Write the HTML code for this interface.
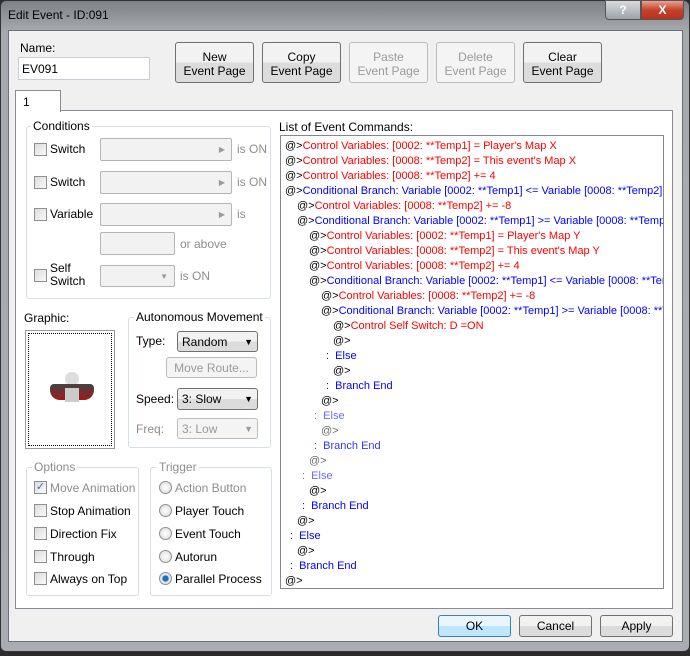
<!DOCTYPE html><html><head><style>
*{box-sizing:border-box;margin:0;padding:0}
body{width:690px;height:656px;background:#2b2b2b;font-family:"Liberation Sans",sans-serif;font-size:12px;color:#000;position:relative;overflow:hidden}
.a{position:absolute}
.frame{left:0;top:0;width:690px;height:652px;background:linear-gradient(#7d8186,#a6aaae 30px,#a9adb1);border:1px solid #333;border-radius:6px}
.client{left:8px;top:30px;width:675px;height:612px;background:#f0f0f0;border:1px solid #6d7177}
.btn{border:1px solid #707070;border-radius:3px;background:linear-gradient(#f2f2f2 50%,#dcdcdc 50%);text-align:center;line-height:14px;font-size:12px}
.dis{color:#9a9a9a;border-color:#bcbcbc;background:#f4f4f4}
.grp{border:1px solid #d5dfe5;border-radius:3px}
.lg{background:#f0f0f0;padding:0 2px;font-size:12px}
.cb{width:13px;height:13px;border:1px solid #8e8f8f;background:linear-gradient(135deg,#dcdcdc,#fafafa)}
.rb{width:13px;height:13px;border:1px solid #8e8f8f;border-radius:50%;background:radial-gradient(#fff,#d8d8d8)}
.dd{border:1px solid #b5b5b5;background:#f2f2f2;border-radius:2px}
.gray{color:#8d8d8d}
.ln{position:absolute;white-space:nowrap;font-size:11px;line-height:15px}
.r{color:#f00}.b{color:#0000ff}
.arr{position:absolute;right:6px;top:6px;font-size:8px;color:#999}
</style></head><body>
<div class="a frame"></div>
<div class="a" style="left:8px;top:8px;font-size:12px">Edit Event - ID:091</div>
<div class="a" style="left:605px;top:0;width:36px;height:20px;border:1px solid #555;border-radius:0 0 0 4px;background:linear-gradient(#d8dadd,#9ea3a8);text-align:center;color:#fff;font-weight:bold;line-height:18px">?</div>
<div class="a" style="left:641px;top:0;width:43px;height:20px;border:1px solid #555;border-radius:0 0 4px 0;background:linear-gradient(#e8a293,#c4412a 50%,#b8321c);text-align:center;color:#fff;font-weight:bold;line-height:18px">X</div>
<div class="a client"></div>
<div class="a" style="left:20px;top:41px">Name:</div>
<div class="a" style="left:18px;top:57px;width:132px;height:23px;border:1px solid #c8ced6;background:#fff;padding:4px 3px">EV091</div>
<div class="a btn" style="left:175px;top:42px;width:79px;height:41px;padding-top:7px">New<br>Event Page</div>
<div class="a btn" style="left:262px;top:42px;width:79px;height:41px;padding-top:7px">Copy<br>Event Page</div>
<div class="a btn dis" style="left:349px;top:42px;width:79px;height:41px;padding-top:7px">Paste<br>Event Page</div>
<div class="a btn dis" style="left:436px;top:42px;width:79px;height:41px;padding-top:7px">Delete<br>Event Page</div>
<div class="a btn" style="left:523px;top:42px;width:79px;height:41px;padding-top:7px">Clear<br>Event Page</div>
<div class="a" style="left:15px;top:110px;width:658px;height:499px;background:#fff;border:1px solid #898c95"></div>
<div class="a" style="left:15px;top:90px;width:46px;height:22px;background:#fff;border:1px solid #898c95;border-bottom:none;padding:4px 7px">1</div>
<!-- conditions -->
<div class="a grp" style="left:26px;top:126px;width:245px;height:173px"></div>
<div class="a lg" style="left:31px;top:119px;background:#fff">Conditions</div>
<div class="a cb" style="left:34px;top:143px"></div><div class="a" style="left:50px;top:142px">Switch</div>
<div class="a dd" style="left:100px;top:138px;width:132px;height:23px"><span class="arr">▶</span></div><div class="a gray" style="left:237px;top:142px">is ON</div>
<div class="a cb" style="left:34px;top:176px"></div><div class="a" style="left:50px;top:175px">Switch</div>
<div class="a dd" style="left:100px;top:171px;width:132px;height:23px"><span class="arr">▶</span></div><div class="a gray" style="left:237px;top:175px">is ON</div>
<div class="a cb" style="left:34px;top:208px"></div><div class="a" style="left:50px;top:207px">Variable</div>
<div class="a dd" style="left:100px;top:203px;width:132px;height:23px"><span class="arr">▶</span></div><div class="a gray" style="left:237px;top:207px">is</div>
<div class="a dd" style="left:100px;top:232px;width:75px;height:23px"></div><div class="a gray" style="left:180px;top:237px">or above</div>
<div class="a cb" style="left:34px;top:269px"></div><div class="a" style="left:50px;top:262px;line-height:13px">Self<br>Switch</div>
<div class="a dd" style="left:100px;top:265px;width:75px;height:22px"><span class="arr">▼</span></div><div class="a gray" style="left:180px;top:269px">is ON</div>
<!-- graphic -->
<div class="a" style="left:24px;top:311px">Graphic:</div>
<div class="a" style="left:25px;top:330px;width:90px;height:119px;border:1px solid #999;padding:2px"><div style="width:100%;height:100%;border:1px dotted #000"></div></div>
<div class="a" style="left:50px;top:372px;width:44px;height:32px">
<div class="a" style="left:15px;top:0;width:14px;height:14px;background:#ddd;border-radius:50%"></div>
<div class="a" style="left:0;top:12px;width:44px;height:16px;background:linear-gradient(#444,#a01818);border-radius:4px 4px 10px 10px"></div>
<div class="a" style="left:15px;top:16px;width:14px;height:14px;background:#ccc"></div></div>
<div class="a grp" style="left:128px;top:317px;width:143px;height:131px"></div>
<div class="a lg" style="left:134px;top:310px;background:#fff">Autonomous Movement</div>
<div class="a" style="left:136px;top:334px">Type:</div>
<div class="a btn" style="left:177px;top:331px;width:81px;height:21px;padding:3px 4px;text-align:left">Random<span style="float:right;font-size:9px">▼</span></div>
<div class="a btn dis" style="left:166px;top:357px;width:91px;height:21px;padding-top:3px">Move Route...</div>
<div class="a" style="left:136px;top:392px">Speed:</div>
<div class="a btn" style="left:177px;top:388px;width:81px;height:22px;padding:3px 4px;text-align:left">3: Slow<span style="float:right;font-size:9px">▼</span></div>
<div class="a gray" style="left:136px;top:422px">Freq:</div>
<div class="a btn dis" style="left:177px;top:418px;width:81px;height:21px;padding:3px 4px;text-align:left">3: Low<span style="float:right;font-size:9px">▼</span></div>
<!-- options -->
<div class="a grp" style="left:26px;top:467px;width:113px;height:129px"></div>
<div class="a lg gray" style="left:32px;top:460px;background:#fff">Options</div>
<div class="a cb" style="left:34px;top:481px;text-align:center;line-height:10px;color:#4a6ea8;font-size:11px">✓</div><div class="a gray" style="left:50px;top:481px">Move Animation</div>
<div class="a cb" style="left:34px;top:504px"></div><div class="a" style="left:50px;top:504px">Stop Animation</div>
<div class="a cb" style="left:34px;top:527px"></div><div class="a" style="left:50px;top:527px">Direction Fix</div>
<div class="a cb" style="left:34px;top:550px"></div><div class="a" style="left:50px;top:550px">Through</div>
<div class="a cb" style="left:34px;top:572px"></div><div class="a" style="left:50px;top:572px">Always on Top</div>
<div class="a grp" style="left:150px;top:467px;width:122px;height:129px"></div>
<div class="a lg gray" style="left:157px;top:460px;background:#fff">Trigger</div>
<div class="a rb" style="left:159px;top:481px"></div><div class="a gray" style="left:175px;top:481px">Action Button</div>
<div class="a rb" style="left:159px;top:504px"></div><div class="a" style="left:175px;top:504px">Player Touch</div>
<div class="a rb" style="left:159px;top:527px"></div><div class="a" style="left:175px;top:527px">Event Touch</div>
<div class="a rb" style="left:159px;top:550px"></div><div class="a" style="left:175px;top:550px">Autorun</div>
<div class="a rb" style="left:159px;top:572px;background:radial-gradient(#1a6fc4 35%,#dce6ee 45%)"></div><div class="a" style="left:175px;top:572px">Parallel Process</div>
<!-- list -->
<div class="a" style="left:279px;top:120px">List of Event Commands:</div>
<div class="a" style="left:280px;top:135px;width:384px;height:454px;border:1px solid #828790;background:#fff;overflow:hidden">
<div style="position:relative;left:-280px;top:-135px">
<div class="ln" style="left:284px;top:138px">@&gt;<span class="r">Control Variables: [0002: **Temp1] = Player's Map X</span></div>
<div class="ln" style="left:284px;top:153px">@&gt;<span class="r">Control Variables: [0008: **Temp2] = This event's Map X</span></div>
<div class="ln" style="left:284px;top:168px">@&gt;<span class="r">Control Variables: [0008: **Temp2] += 4</span></div>
<div class="ln" style="left:284px;top:183px">@&gt;<span class="b">Conditional Branch: Variable [0002: **Temp1] &lt;= Variable [0008: **Temp2]</span></div>
<div class="ln" style="left:296px;top:198px">@&gt;<span class="r">Control Variables: [0008: **Temp2] += -8</span></div>
<div class="ln" style="left:296px;top:213px">@&gt;<span class="b">Conditional Branch: Variable [0002: **Temp1] &gt;= Variable [0008: **Temp2]</span></div>
<div class="ln" style="left:308px;top:228px">@&gt;<span class="r">Control Variables: [0002: **Temp1] = Player's Map Y</span></div>
<div class="ln" style="left:308px;top:243px">@&gt;<span class="r">Control Variables: [0008: **Temp2] = This event's Map Y</span></div>
<div class="ln" style="left:308px;top:258px">@&gt;<span class="r">Control Variables: [0008: **Temp2] += 4</span></div>
<div class="ln" style="left:308px;top:273px">@&gt;<span class="b">Conditional Branch: Variable [0002: **Temp1] &lt;= Variable [0008: **Temp2]</span></div>
<div class="ln" style="left:320px;top:288px">@&gt;<span class="r">Control Variables: [0008: **Temp2] += -8</span></div>
<div class="ln" style="left:320px;top:303px">@&gt;<span class="b">Conditional Branch: Variable [0002: **Temp1] &gt;= Variable [0008: **Temp2]</span></div>
<div class="ln" style="left:332px;top:318px">@&gt;<span class="r">Control Self Switch: D =ON</span></div>
<div class="ln" style="left:332px;top:333px">@&gt;</div>
<div class="ln b" style="left:325px;top:348px">: &nbsp;Else</div>
<div class="ln" style="left:332px;top:363px">@&gt;</div>
<div class="ln b" style="left:325px;top:378px">: &nbsp;Branch End</div>
<div class="ln" style="left:320px;top:393px">@&gt;</div>
<div class="ln b" style="left:313px;top:408px;opacity:.6">: &nbsp;Else</div>
<div class="ln" style="left:320px;top:423px;opacity:.6">@&gt;</div>
<div class="ln b" style="left:313px;top:438px;opacity:.8">: &nbsp;Branch End</div>
<div class="ln" style="left:308px;top:453px;opacity:.6">@&gt;</div>
<div class="ln b" style="left:301px;top:468px;opacity:.6">: &nbsp;Else</div>
<div class="ln" style="left:308px;top:483px">@&gt;</div>
<div class="ln b" style="left:301px;top:498px">: &nbsp;Branch End</div>
<div class="ln" style="left:296px;top:513px">@&gt;</div>
<div class="ln b" style="left:289px;top:528px">: &nbsp;Else</div>
<div class="ln" style="left:296px;top:543px">@&gt;</div>
<div class="ln b" style="left:289px;top:558px">: &nbsp;Branch End</div>
<div class="ln" style="left:284px;top:573px">@&gt;</div>
</div></div>
<div class="a btn" style="left:438px;top:615px;width:73px;height:22px;line-height:20px;border-color:#3c7fb1;background:linear-gradient(#eaf6fd 50%,#bee6fd 50%)">OK</div>
<div class="a btn" style="left:519px;top:615px;width:73px;height:22px;line-height:20px">Cancel</div>
<div class="a btn" style="left:600px;top:615px;width:73px;height:22px;line-height:20px">Apply</div>
</body></html>
